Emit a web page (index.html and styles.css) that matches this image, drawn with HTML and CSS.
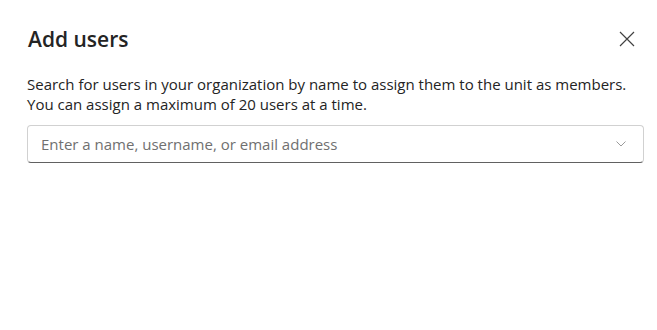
FILE: index.html
```html
<!DOCTYPE html>
<html lang="en">
<head>
	<meta charset="UTF-8">
	<title>Add users</title>
	<link rel="stylesheet" href="styles.css">
</head>
<body>
	<div class="dialog">
		<div class="dialog-head">
			<h2 class="dialog-title">Add users</h2>
			<button class="close-btn" aria-label="Close">
				<svg width="16" height="16" viewBox="0 0 16 16"><path d="M1 1L15 15M15 1L1 15" stroke="#424242" stroke-width="1.2" fill="none"/></svg>
			</button>
		</div>
		<p class="dialog-text">Search for users in your organization by name to assign them to the unit as members. You can assign a maximum of 20 users at a time.</p>
		<div class="picker">
			<input class="picker-input" type="text" placeholder="Enter a name, username, or email address">
			<svg class="chevron" width="10" height="6" viewBox="0 0 10 6"><path d="M0.5 0.5L5 5L9.5 0.5" stroke="#9a9a9a" stroke-width="1" fill="none"/></svg>
		</div>
	</div>
</body>
</html>
```
FILE: styles.css
```css
*{
	margin:0;
	padding:0;
	box-sizing:border-box;
}
body{
	background:#fff;
	font-family:"Open Sans", "Noto Sans", sans-serif;
	color:#242424;
}
.dialog{
	padding:23px 13px 0 27px;
}
.dialog-head{
	display:flex;
	align-items:center;
	justify-content:space-between;
	height:32px;
}
.dialog-title{
	font-size:21px;
	font-weight:600;
	line-height:28px;
	margin-left:1px;
}
.close-btn{
	width:32px;
	height:32px;
	margin-right:1px;
	border:none;
	background:none;
	display:flex;
	align-items:center;
	justify-content:center;
}
.dialog-text{
	margin-top:19px;
	font-size:15px;
	line-height:20px;
	padding-right:11px;
}
.picker{
	margin-top:11px;
	height:38px;
	border:1px solid #d1d1d1;
	border-bottom-color:#616161;
	border-radius:4px;
	display:flex;
	align-items:center;
}
.picker-input{
	flex:1;
	border:none;
	outline:none;
	background:none;
	font-family:inherit;
	font-size:15px;
	padding-left:13px;
	color:#242424;
}
.picker-input::placeholder{
	color:#707070;
}
.chevron{
	margin-right:17px;
}
```
